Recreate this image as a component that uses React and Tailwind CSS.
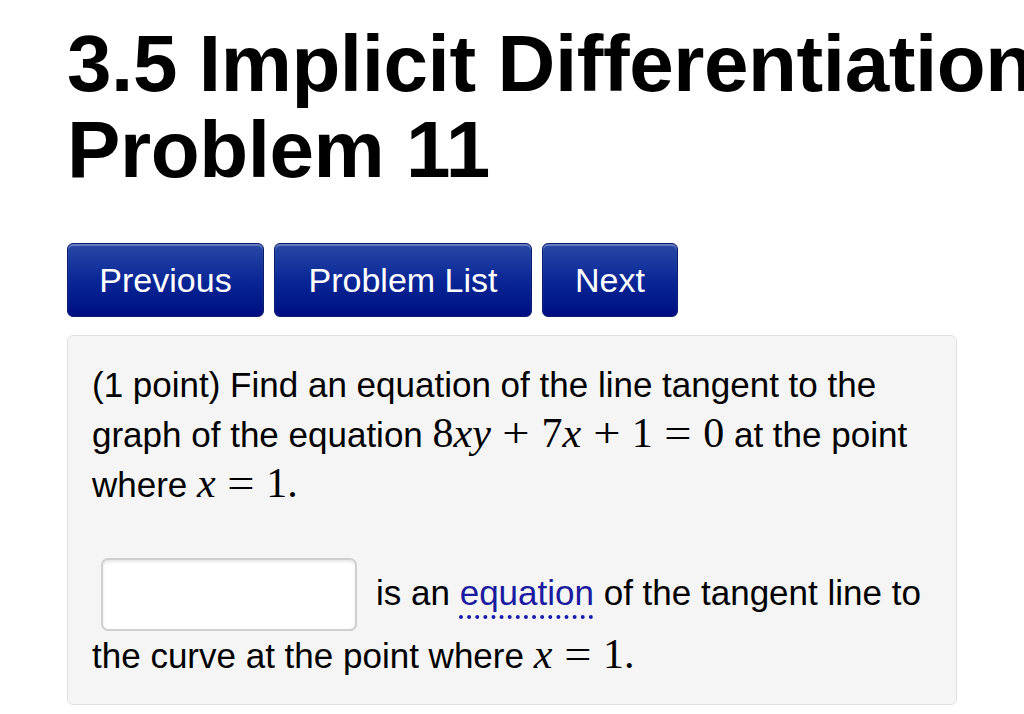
function Op({ children }) {
  return <span className="mx-[0.32em] inline-block scale-x-[1.15]">{children}</span>;
}

function M({ children }) {
  return <span className="font-['Liberation_Serif',serif] text-[42px] leading-none">{children}</span>;
}

const BUTTONS = [
  { label: 'Previous', w: 'w-[197px]' },
  { label: 'Problem List', w: 'w-[258px]' },
  { label: 'Next', w: 'w-[136px]' },
];

export default function App() {
  return (
    <div className="w-[1024px] h-[714px] overflow-hidden bg-white text-black font-['Liberation_Sans',Arial,sans-serif]">
      <div className="pl-[67px] pt-[21px]">
        <h1 className="text-[80px] font-bold leading-[86px] whitespace-nowrap tracking-[-0.4px]">
          3.5 Implicit Differentiation
          <br />
          Problem 11
        </h1>

        <div className="flex gap-[10px] mt-[50px]">
          {BUTTONS.map((b) => (
            <button
              key={b.label}
              className={`${b.w} h-[74px] rounded-[6px] border border-[#0a1c6e] bg-gradient-to-b from-[#2848a6] via-[#0b2696] to-[#000d82] text-white text-[34px] shadow-[inset_0_2px_1px_rgba(255,255,255,0.3)]`}
            >
              {b.label}
            </button>
          ))}
        </div>

        <div className="mt-[18px] w-[890px] h-[370px] rounded-[6px] border border-[#e0e0e0] bg-[#f5f5f5] pl-[24px] pr-[20px] pt-[24px] text-[35px] leading-[50px]">
          <p>
            (1 point) Find an equation of the line tangent to the graph of the equation{' '}
            <M>
              8<i>xy</i><Op>+</Op>7<i>x</i><Op>+</Op>1<Op>=</Op>0
            </M>{' '}
            at the point where{' '}
            <M>
              <i>x</i><Op>=</Op>1.
            </M>
          </p>

          <div className="mt-[48px] flex items-start">
            <div className="ml-[9px] w-[256px] h-[73px] rounded-[7px] border-2 border-[#cfcfcf] bg-white shadow-[inset_0_2px_3px_rgba(0,0,0,0.1)]" />
            <span className="ml-[19px] mt-[10px]">
              is an{' '}
              <span className="text-[#1b1ba0] underline decoration-dotted decoration-[4px] underline-offset-[10px] decoration-[#1b1bb0]">equation</span>{' '}
              of the tangent line to
            </span>
          </div>
          <p>
            the curve at the point where{' '}
            <M>
              <i>x</i><Op>=</Op>1.
            </M>
          </p>
        </div>
      </div>
    </div>
  );
}
